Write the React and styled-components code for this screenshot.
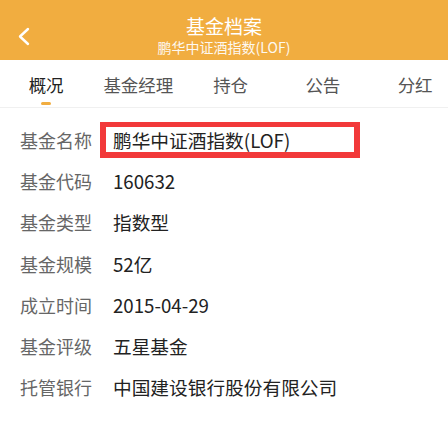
import styled, { createGlobalStyle } from "styled-components";

const GlobalStyle = createGlobalStyle`
  body {
    margin: 0;
    background: #fff;
    font-family: "Noto Sans CJK SC", "Noto Sans", sans-serif;
  }
`;

const Header = styled.div`
  position: relative;
  height: 60px;
  background: #f1ad40;
  color: #fff;
  display: flex;
  flex-direction: column;
  align-items: center;
  padding-top: 14px;
  box-sizing: border-box;
`;
const BackButton = styled.div`
  position: absolute;
  left: 16px;
  top: 26px;
  width: 16px;
  height: 20px;
  display: flex;
`;
const Title = styled.div`
  font-size: 19px;
  line-height: 24px;
`;
const SubTitle = styled.div`
  font-size: 14px;
  line-height: 18px;
  opacity: 0.92;
`;

const TabBar = styled.div`
  display: flex;
  height: 48px;
  overflow: hidden;
  border-bottom: 1px solid #f0f0f0;
  box-sizing: border-box;
`;
const Tab = styled.div`
  flex: 0 0 92.25px;
  display: flex;
  flex-direction: column;
  align-items: center;
  padding-top: 13px;
  box-sizing: border-box;
  font-size: 17.5px;
  line-height: 24px;
  white-space: nowrap;
  color: ${(p) => (p.active ? "#222" : "#555")};
`;
const Indicator = styled.div`
  margin-top: 5px;
  width: 10px;
  height: 3px;
  border-radius: 2px;
  background: ${(p) => (p.show ? "#f1ad40" : "transparent")};
`;

const InfoList = styled.div`
  padding: 11px 0 0 20px;
`;
const Row = styled.div`
  display: flex;
  align-items: center;
  height: 41.3px;
`;
const Label = styled.div`
  width: 73px;
  font-size: 18px;
  color: #666;
  white-space: nowrap;
`;
const Value = styled.div`
  margin-left: 7px;
  box-sizing: border-box;
  height: 36px;
  display: flex;
  align-items: center;
  padding-left: 7px;
  width: ${(p) => (p.highlight ? "260px" : "auto")};
  border: 6px solid ${(p) => (p.highlight ? "#f2393a" : "transparent")};
  border-top-width: 5px;
  font-size: 18.7px;
  color: #222;
  white-space: nowrap;
`;

const tabs = ["概况", "基金经理", "持仓", "公告", "分红"];
const rows = [
  ["基金名称", "鹏华中证酒指数(LOF)", true],
  ["基金代码", "160632"],
  ["基金类型", "指数型"],
  ["基金规模", "52亿"],
  ["成立时间", "2015-04-29"],
  ["基金评级", "五星基金"],
  ["托管银行", "中国建设银行股份有限公司"],
];

export default function App() {
  return (
    <>
      <GlobalStyle />
      <Header>
        <BackButton>
          <svg width="16" height="20" viewBox="0 0 16 20">
            <path d="M12 3 L4 10.5 L12 18" fill="none" stroke="#fff" strokeWidth="2.4" strokeLinecap="round" strokeLinejoin="round" />
          </svg>
        </BackButton>
        <Title>基金档案</Title>
        <SubTitle>鹏华中证酒指数(LOF)</SubTitle>
      </Header>
      <TabBar>
        {tabs.map((t, i) => (
          <Tab key={t} active={i === 0}>
            {t}
            <Indicator show={i === 0} />
          </Tab>
        ))}
      </TabBar>
      <InfoList>
        {rows.map(([label, value, hl]) => (
          <Row key={label}>
            <Label>{label}</Label>
            <Value highlight={hl}>{value}</Value>
          </Row>
        ))}
      </InfoList>
    </>
  );
}
